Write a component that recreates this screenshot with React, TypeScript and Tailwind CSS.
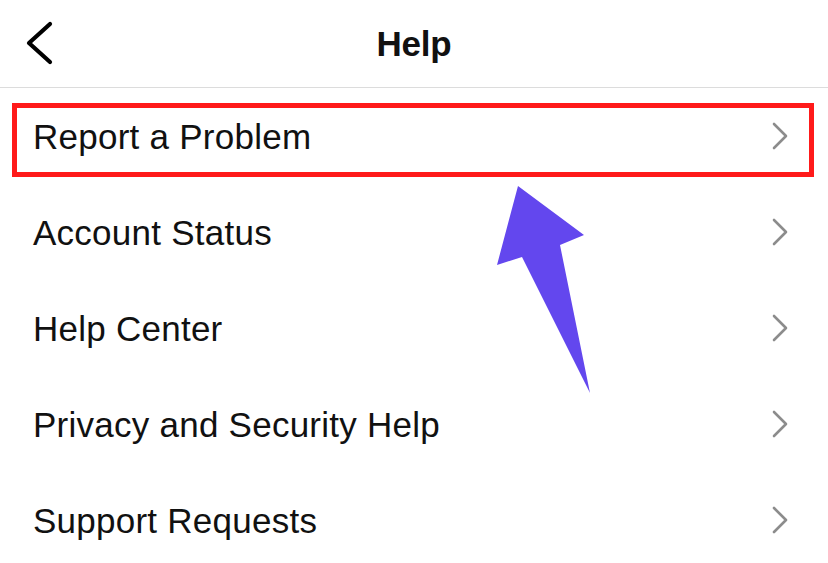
import React from 'react';

const items = [
  'Report a Problem',
  'Account Status',
  'Help Center',
  'Privacy and Security Help',
  'Support Requests',
];

const ChevronRight = () => (
  <svg width="18" height="30" viewBox="0 0 18 30" fill="none" className="shrink-0">
    <path d="M3 3l12 12L3 27" stroke="#8c8c8c" strokeWidth="2.6" strokeLinecap="round" strokeLinejoin="round" />
  </svg>
);

const App: React.FC = () => {
  return (
    <div
      className="relative w-[828px] h-[563px] overflow-hidden bg-white text-[#111]"
      style={{ fontFamily: '"Liberation Sans", Arial, sans-serif' }}
    >
      {/* Header */}
      <div className="relative flex items-center justify-center h-[88px] border-b-[1.5px] border-[#dcdcdc]">
        <button className="absolute left-[24px] top-[20px]">
          <svg width="32" height="46" viewBox="0 0 32 46" fill="none">
            <path d="M26 4L5 23l21 19" stroke="#000" strokeWidth="4.2" strokeLinecap="round" strokeLinejoin="round" />
          </svg>
        </button>
        <h1 className="text-[35px] font-bold tracking-[-0.2px] pt-[2px]">Help</h1>
      </div>

      {/* List */}
      <ul>
        {items.map((name) => (
          <li key={name} className="flex items-center justify-between h-[96px] pl-[33px] pr-[39px]">
            <span className="text-[35px] leading-none tracking-[0.25px]">{name}</span>
            <ChevronRight />
          </li>
        ))}
      </ul>

      {/* Highlight box */}
      <div className="absolute left-[12px] top-[103px] w-[802px] h-[74px] border-[5px] border-[#ff1a1a]" />

      {/* Arrow */}
      <svg className="absolute left-0 top-0 pointer-events-none" width="828" height="563" viewBox="0 0 828 563">
        <polygon points="518,186 584,235 560,245 590,393 522,257 497,265" fill="#6347ee" />
      </svg>
    </div>
  );
};

export default App;
